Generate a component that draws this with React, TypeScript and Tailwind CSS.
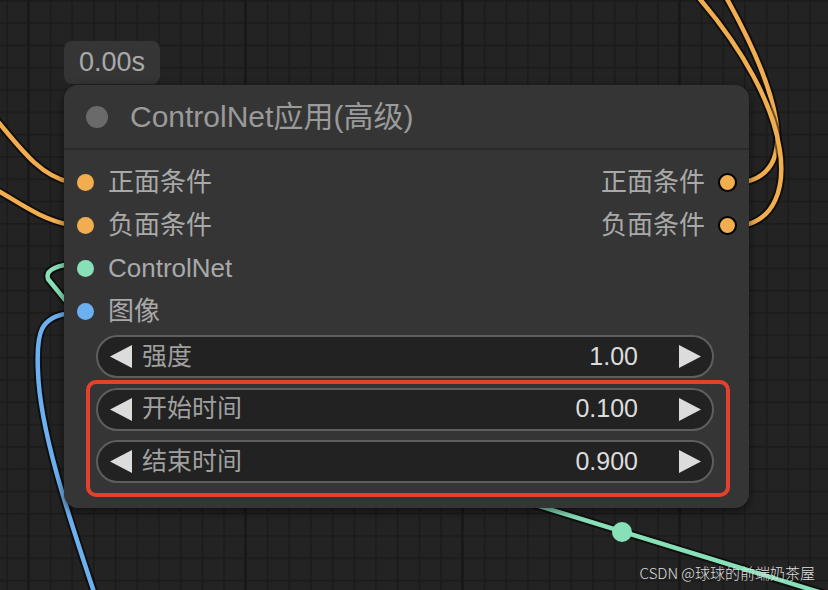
import React from "react"

const FONT = { fontFamily: '"Liberation Sans", "Noto Sans CJK SC", sans-serif' }

type Slot = { label: string; color: string }

function Dot({ color, outlined }: { color: string; outlined?: boolean }) {
  return (
    <span
      className={
        outlined
          ? "block h-[19px] w-[19px] shrink-0 rounded-full border-2 border-black"
          : "block h-[17px] w-[17px] shrink-0 rounded-full"
      }
      style={{ backgroundColor: color }}
    />
  )
}

function Arrow({ dir }: { dir: "left" | "right" }) {
  return (
    <svg width="22" height="23" viewBox="0 0 22 23" className="shrink-0">
      <polygon points={dir === "left" ? "22,0 22,23 0,11.5" : "0,0 0,23 22,11.5"} fill="#dcdcdc" />
    </svg>
  )
}

function Widget({ label, value }: { label: string; value: string }) {
  return (
    <div className="flex h-[43px] items-center rounded-full border-2 border-[#5e5e5e] bg-[#222222] pl-[12px] pr-[11px]">
      <Arrow dir="left" />
      <span className="ml-[10px] text-[25px] text-[#a0a0a0]">{label}</span>
      <span className="ml-auto text-[25px] text-[#dcdcdc]">{value}</span>
      <span className="ml-[41px]">
        <Arrow dir="right" />
      </span>
    </div>
  )
}

function Wire({ d, color }: { d: string; color: string }) {
  return (
    <g fill="none" strokeLinecap="round">
      <path d={d} stroke="#000" strokeOpacity="0.55" strokeWidth="8.5" />
      <path d={d} stroke={color} strokeWidth="4.5" />
    </g>
  )
}

export default function App() {
  const orange = "#f1ad4e"
  const green = "#88e0b8"
  const blue = "#6db0ef"

  const inputs: Slot[] = [
    { label: "正面条件", color: orange },
    { label: "负面条件", color: orange },
    { label: "ControlNet", color: green },
    { label: "图像", color: blue },
  ]
  const outputs: Slot[] = [
    { label: "正面条件", color: orange },
    { label: "负面条件", color: orange },
  ]

  return (
    <div className="relative h-[590px] w-[828px] overflow-hidden bg-[#232323]" style={FONT}>
      {/* canvas grid + links */}
      <svg className="absolute inset-0" width="828" height="590">
        <defs>
          <pattern id="small" x="245" y="0" width="21.7" height="22.3" patternUnits="userSpaceOnUse">
            <rect x="0" y="0" width="1.6" height="22.3" fill="#1b1b1b" />
            <rect x="0" y="0" width="21.7" height="1.6" fill="#1b1b1b" />
          </pattern>
          <pattern id="big" x="244" y="0" width="217" height="223" patternUnits="userSpaceOnUse">
            <rect x="0" y="0" width="3" height="223" fill="#191919" />
          </pattern>
        </defs>
        <rect width="828" height="590" fill="url(#small)" />
        <rect width="828" height="590" fill="url(#big)" />

        <Wire d="M -5 118 C 20 148, 40 176, 70 182" color={orange} />
        <Wire d="M -5 189 C 20 203, 40 219, 70 225" color={orange} />
        <Wire d="M 745 182 C 800 170, 780 92, 722 -10" color={orange} />
        <Wire d="M 745 225 C 800 213, 800 112, 692 -10" color={orange} />
        <Wire d="M 70 264 Q 44 268 48 279 L 70 306" color={green} />
        <Wire d="M 70 313 C 40 317, 36 332, 38 372 C 40 432, 70 520, 96 598" color={blue} />
        <Wire d="M 500 494 L 832 596" color={green} />
        <circle cx="622" cy="532" r="10" fill={green} />
      </svg>

      {/* node */}
      <div className="absolute left-[64px] top-[41px] flex flex-col items-start">
        <div className="flex h-[43px] w-[96px] items-center justify-center rounded-[8px] bg-[#353535] text-[27px] text-[#a9a9a9]">
          0.00s
        </div>
        <div className="mt-[1px] w-[685px] rounded-[14px] bg-[#353535] pb-[25px] shadow-[0_3px_10px_rgba(0,0,0,0.55)]">
          <div className="flex h-[65px] items-center border-b-2 border-[#2a2a2a] pl-[22px]">
            <span className="block h-[22px] w-[22px] rounded-full bg-[#6a6a6a]" />
            <span className="ml-[22px] text-[30px] text-[#9a9a9a]">ControlNet应用(高级)</span>
          </div>

          <div className="pt-[11px]">
            {inputs.map((slot, i) => (
              <div key={i} className="flex h-[43px] items-center justify-between pl-[13px] pr-[12px]">
                <div className="flex items-center gap-[14px]">
                  <Dot color={slot.color} />
                  <span className="text-[26px] text-[#a9a9a9]">{slot.label}</span>
                </div>
                {outputs[i] && (
                  <div className="flex items-center gap-[13px]">
                    <span className="text-[26px] text-[#a9a9a9]">{outputs[i].label}</span>
                    <Dot color={outputs[i].color} outlined />
                  </div>
                )}
              </div>
            ))}
          </div>

          <div className="mt-[2px] flex flex-col gap-[9.5px] pl-[32px] pr-[35px]">
            <Widget label="强度" value="1.00" />
            <div className="relative flex flex-col gap-[9.5px]">
              <div className="pointer-events-none absolute -bottom-[14px] -left-[10px] -right-[16px] -top-[8px] rounded-[10px] border-4 border-[#e4412c]" />
              <Widget label="开始时间" value="0.100" />
              <Widget label="结束时间" value="0.900" />
            </div>
          </div>
        </div>
      </div>

      <div className="absolute bottom-[6px] right-[13px] text-[15px] font-light text-[#dedede]" style={{ fontFamily: '"Noto Sans CJK SC", sans-serif' }}>
        CSDN @球球的前端奶茶屋
      </div>
    </div>
  )
}
